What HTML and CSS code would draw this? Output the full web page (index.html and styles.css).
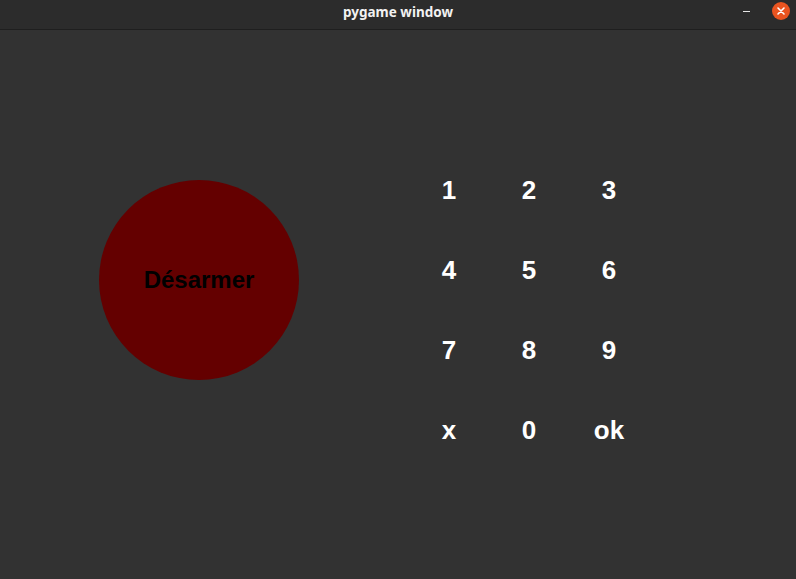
FILE: index.html
```html
<!DOCTYPE html>
<html>
<head>
<meta charset="utf-8">
<link rel="stylesheet" href="styles.css">
</head>
<body>
<div class="window">
  <header class="titlebar">
    <span class="title">pygame window</span>
    <div class="controls">
      <span class="minimize"></span>
      <span class="close">
        <svg width="18" height="18" viewBox="0 0 18 18"><path d="M6 6 L12 12 M12 6 L6 12" stroke="#fff" stroke-width="1.6" stroke-linecap="round"/></svg>
      </span>
    </div>
  </header>
  <main class="content">
    <div class="disarm">Désarmer</div>
    <div class="keypad">
      <div class="key">1</div><div class="key">2</div><div class="key">3</div>
      <div class="key">4</div><div class="key">5</div><div class="key">6</div>
      <div class="key">7</div><div class="key">8</div><div class="key">9</div>
      <div class="key">x</div><div class="key">0</div><div class="key">ok</div>
    </div>
  </main>
</div>
</body>
</html>
```
FILE: styles.css
```css
html, body {
  margin: 0;
  padding: 0;
  width: 796px;
  height: 579px;
  overflow: hidden;
  background: #323232;
}
.window {
  display: flex;
  flex-direction: column;
  height: 579px;
}
.titlebar {
  position: relative;
  height: 29px;
  background: #2c2c2c;
  border-bottom: 1px solid #1f1f1f;
  display: flex;
  align-items: center;
  justify-content: center;
  flex-shrink: 0;
}
.title {
  font-family: "Noto Sans", "DejaVu Sans", sans-serif;
  font-weight: 700;
  font-size: 13.5px;
  color: #f2f2f2;
  margin-top: -5px;
}
.controls {
  position: absolute;
  right: 6px;
  top: 2px;
  display: flex;
  align-items: center;
  gap: 22px;
}
.minimize {
  display: block;
  width: 7px;
  height: 1px;
  background: #e6e6e6;
  margin-top: 1px;
}
.close {
  display: flex;
  width: 18px;
  height: 18px;
  border-radius: 50%;
  background: #e95420;
}
.content {
  flex: 1;
  display: flex;
  align-items: flex-start;
  padding: 120px 0 0 99px;
  gap: 110px;
  background: #323232;
}
.disarm {
  margin-top: 30px;
  width: 200px;
  height: 200px;
  border-radius: 50%;
  background: #640000;
  display: flex;
  align-items: center;
  justify-content: center;
  font-family: "Liberation Sans", Arial, sans-serif;
  font-weight: 700;
  font-size: 24px;
  color: #000;
}
.keypad {
  display: grid;
  grid-template-columns: repeat(3, 80px);
  grid-auto-rows: 80px;
}
.key {
  display: flex;
  align-items: center;
  justify-content: center;
  font-family: "Liberation Sans", Arial, sans-serif;
  font-weight: 700;
  font-size: 26px;
  color: #fff;
}
```
